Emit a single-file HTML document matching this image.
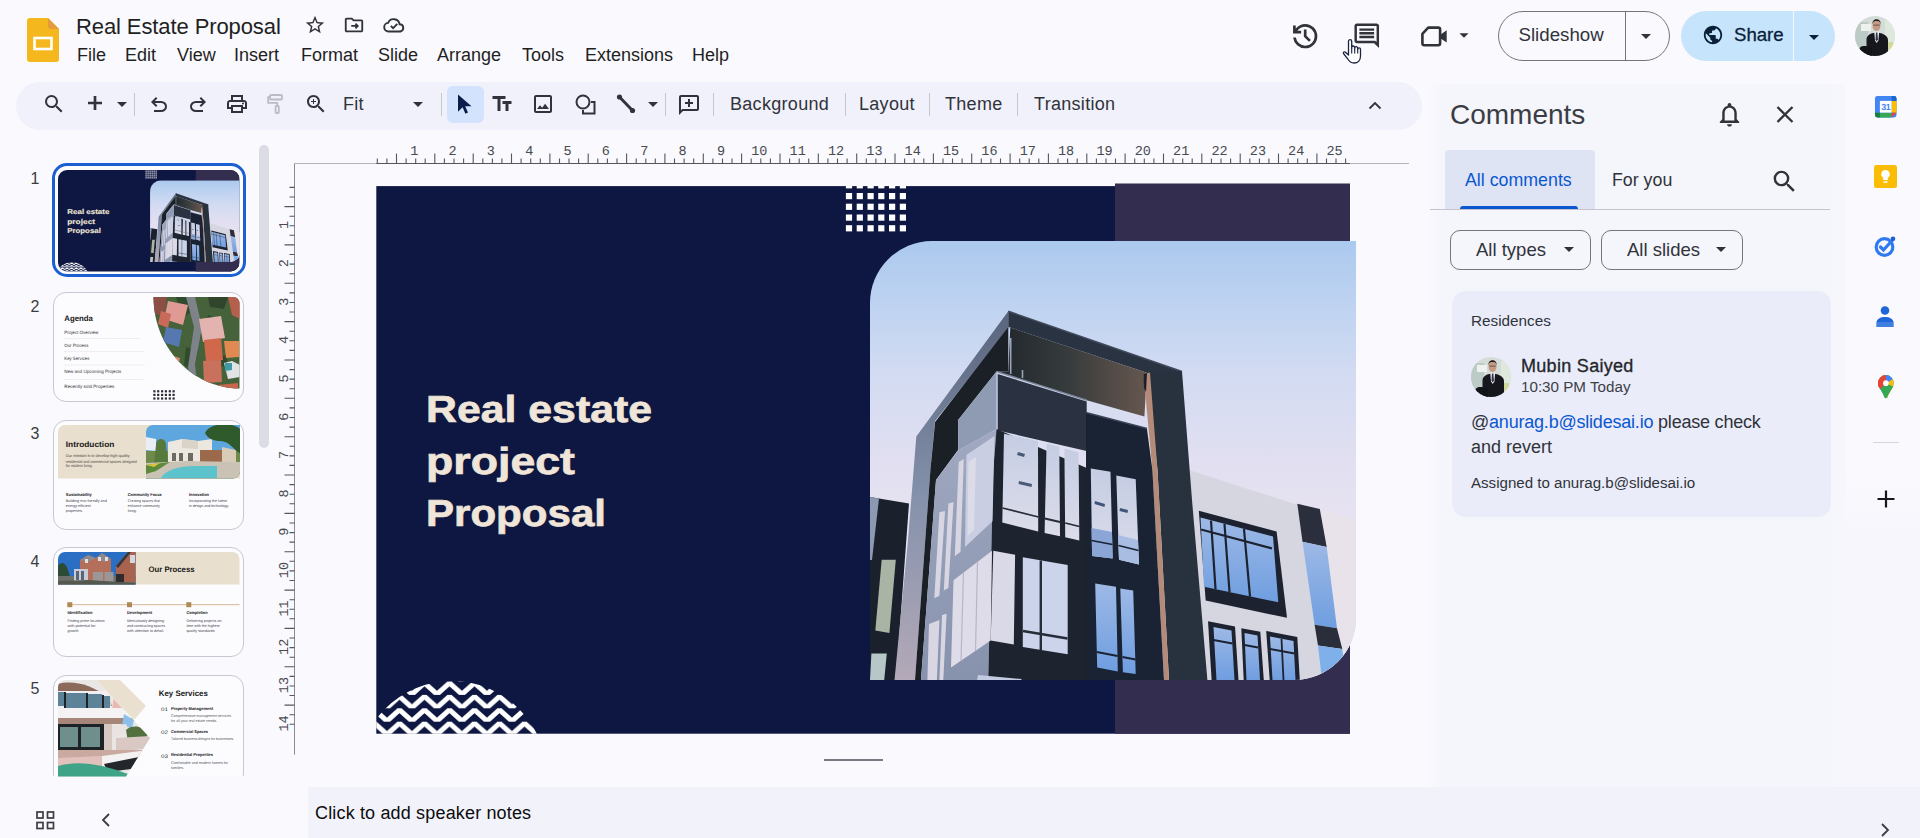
<!DOCTYPE html>
<html lang="en">
<head>
<meta charset="utf-8">
<title>Real Estate Proposal - Google Slides</title>
<style>
*{box-sizing:border-box;margin:0;padding:0}
html,body{width:1920px;height:838px;overflow:hidden}
body{background:#faf9fe;font-family:"Liberation Sans",Arial,sans-serif;color:#1f1f1f;position:relative}
.a{position:absolute}
.t{position:absolute;white-space:nowrap;line-height:1}
svg{position:absolute;overflow:visible}
svg text{text-rendering:geometricPrecision}
.menu{font-size:18px;top:46px;color:#1f1f1f}
.tb{font-size:18px;top:95px;color:#30333a;letter-spacing:.3px}
.sep{position:absolute;top:93px;width:1px;height:23px;background:#c7c7c7}
.num{font-size:16px;color:#3c3c3c;left:28px;width:14px;text-align:center}
.thumb{position:absolute;left:54px;width:190px;height:110px;border-radius:12px;border:1px solid #c9cad3;overflow:hidden;background:#fff}
</style>
</head>
<body>
<!-- background tint layers -->
<div class="a" style="left:1426px;top:84px;width:420px;height:754px;background:linear-gradient(90deg,rgba(245,245,252,0),#f5f5fc 18px,#f5f5fc 400px,rgba(245,245,252,.6))"></div>
<div class="a" style="left:1846px;top:470px;width:74px;height:368px;background:linear-gradient(180deg,rgba(246,246,252,0),#f6f6fc 70px)"></div>
<div class="a" style="left:308px;top:787px;width:1612px;height:51px;background:#f2f2fb"></div>
<!-- ===== HEADER ===== -->
<div id="header">
<svg style="left:27px;top:18px" width="32" height="44" viewBox="0 0 32 44"><path d="M3 0h18l11 11v30a3 3 0 0 1-3 3H3a3 3 0 0 1-3-3V3a3 3 0 0 1 3-3z" fill="#f4b71e"/><path d="M21 0l11 11H24a3 3 0 0 1-3-3z" fill="#e59a3b"/><rect x="7.5" y="20" width="17" height="11" fill="none" stroke="#fff" stroke-width="2.6"/></svg>
<div class="t" style="left:76px;top:16px;font-size:22px;letter-spacing:-.1px;color:#1f1f1f">Real Estate Proposal</div>
<div class="t menu" style="left:77px">File</div>
<div class="t menu" style="left:125px">Edit</div>
<div class="t menu" style="left:177px">View</div>
<div class="t menu" style="left:234px">Insert</div>
<div class="t menu" style="left:301px">Format</div>
<div class="t menu" style="left:378px">Slide</div>
<div class="t menu" style="left:437px">Arrange</div>
<div class="t menu" style="left:522px">Tools</div>
<div class="t menu" style="left:585px">Extensions</div>
<div class="t menu" style="left:692px">Help</div>
<!-- star / move / cloud -->
<svg style="left:304px;top:14px" width="22" height="22" viewBox="0 0 24 24"><path fill="#30333a" d="M22 9.240l-7.190-.62L12 2 9.190 8.630 2 9.240l5.460 4.730L5.820 21 12 17.270 18.180 21l-1.630-7.030L22 9.240zM12 15.400l-3.760 2.270 1-4.280-3.320-2.880 4.380-.38L12 6.100l1.710 4.040 4.380.38-3.320 2.880 1 4.280L12 15.400z"/></svg>
<svg style="left:343px;top:14px" width="22" height="22" viewBox="0 0 24 24"><path fill="#30333a" d="M20 6h-8l-2-2H4c-1.100 0-2 .9-2 2v12c0 1.100.9 2 2 2h16c1.100 0 2-.9 2-2V8c0-1.100-.9-2-2-2zm0 12H4V6h5.170l2 2H20v10zm-7.160-3.170l1.410 1.410L17.490 13l-3.240-3.240-1.410 1.410.83.830H9v2h4.670l-.83.830z"/></svg>
<svg style="left:382px;top:14px" width="24" height="22" viewBox="0 0 24 22"><path fill="none" stroke="#30333a" stroke-width="1.900" d="M6.500 17.500a4.300 4.300 0 0 1-.4-8.580 6 6 0 0 1 11.500 1.300A3.700 3.700 0 0 1 18.500 17.500z"/><path fill="none" stroke="#30333a" stroke-width="1.900" d="M8.800 11.800l2.300 2.300 4.200-4.200"/></svg>
<!-- history -->
<svg style="left:1288.800px;top:19.500px" width="32.400" height="32.400" viewBox="0 0 24 24"><path fill="#30333a" d="M12 21q-3.450 0-6.012-2.287T3.050 13H5.100q.35 2.600 2.313 4.300T12 19q2.925 0 4.963-2.037T19 12t-2.037-4.963T12 5q-1.725 0-3.225.8T6.250 8H9v2H3V4h2v2.350q1.275-1.600 3.113-2.475T12 3q1.875 0 3.513.713t2.850 1.924 1.925 2.850T21 12t-.712 3.513-1.925 2.850-2.850 1.925T12 21m2.800-4.800L11 12.400V7h2v4.600l3.200 3.200z"/></svg>
<!-- comments icon -->
<svg style="left:1351.500px;top:20.800px" width="29.500" height="29.500" viewBox="0 0 24 24"><path fill="#30333a" d="M21.990 4c0-1.100-.89-2-1.990-2H4c-1.100 0-2 .9-2 2v12c0 1.100.9 2 2 2h14l4 4-.01-18zM20 4v13.170L18.830 16H4V4h16zM6 12h12v2H6zm0-3h12v2H6zm0-3h12v2H6z"/></svg>
<!-- hand cursor -->
<svg style="left:1342px;top:38px" width="20" height="26" viewBox="0 0 20 26"><path fill="#fff" stroke="#1b2340" stroke-width="1.300" stroke-linejoin="round" d="M6.500 14V3.300a1.600 1.600 0 0 1 3.200 0V10.500v-1a1.500 1.500 0 0 1 3 0v1.300-.6a1.500 1.500 0 0 1 3 0v1.300-.3a1.400 1.400 0 0 1 2.800 0V18c0 4-2.300 7-6.500 7-3.300 0-4.800-1.600-6.300-4.200L1.500 15.500c-.6-1.100.9-2.300 2-1.300L6.500 17z"/><path fill="none" stroke="#1b2340" stroke-width="1.100" d="M9.700 10.500v5M12.700 11v4.500M15.700 11.500v4"/></svg>
<!-- camera -->
<svg style="left:1420px;top:25.200px" width="28" height="23" viewBox="0 0 28 23"><path fill="none" stroke="#30333a" stroke-width="2.600" stroke-linejoin="round" d="M2.400 8.800L8.200 2.600h9.900a2 2 0 0 1 2 2v13.700a2 2 0 0 1-2 2H4.400a2 2 0 0 1-2-2z"/><path fill="#30333a" d="M19.500 10.200L26.700 5.200v12.400L19.500 12.800z"/></svg>
<svg style="left:1452.700px;top:23.700px" width="22" height="22" viewBox="0 0 24 24"><path fill="#30333a" d="M7 10l5 5 5-5z"/></svg>
<!-- slideshow -->
<div class="a" style="left:1498px;top:11px;width:172px;height:50px;border-radius:25px;border:1px solid #747775"></div>
<div class="a" style="left:1625px;top:11px;width:1px;height:50px;background:#747775"></div>
<div class="t" style="left:1518.500px;top:26px;font-size:18.700px;color:#30333a">Slideshow</div>
<svg style="left:1634px;top:24px" width="24" height="24" viewBox="0 0 24 24"><path fill="#30333a" d="M7 10l5 5 5-5z"/></svg>
<!-- share -->
<div class="a" style="left:1681px;top:11px;width:154px;height:50px;border-radius:25px;background:#c6e5fc"></div>
<div class="a" style="left:1793px;top:11px;width:1px;height:50px;background:#f3f8fd"></div>
<svg style="left:1702px;top:24px" width="22" height="22" viewBox="0 0 24 24"><path fill="#0a2138" d="M12 2C6.480 2 2 6.480 2 12s4.480 10 10 10 10-4.480 10-10S17.520 2 12 2zm-1 17.930c-3.950-.49-7-3.850-7-7.930 0-.62.080-1.210.21-1.790L9 15v1c0 1.100.9 2 2 2v1.930zm6.900-2.540c-.26-.81-1-1.390-1.900-1.390h-1v-3c0-.55-.45-1-1-1H8v-2h2c.55 0 1-.45 1-1V7h2c1.100 0 2-.9 2-2v-.41c2.930 1.190 5 4.060 5 7.410 0 2.080-.8 3.970-2.100 5.390z"/></svg>
<div class="t" style="left:1734px;top:25.500px;font-size:18.600px;color:#0a2138;-webkit-text-stroke:.3px #0a2138">Share</div>
<svg style="left:1802px;top:25px" width="24" height="24" viewBox="0 0 24 24"><path fill="#0a2138" d="M7 10l5 5 5-5z"/></svg>
<!-- avatar -->
<svg style="left:1855px;top:16px" width="40" height="40" viewBox="0 0 40 40"><defs><clipPath id="av1"><circle cx="20" cy="20" r="20"/></clipPath></defs><g clip-path="url(#av1)"><rect width="40" height="40" fill="#d3dcd6"/><rect x="0" y="6" width="13" height="34" fill="#bccbc6"/><rect x="6" y="8" width="10" height="7" fill="#eef1ee"/><rect x="30" y="4" width="10" height="30" fill="#dfe8dc"/><rect x="33" y="26" width="5" height="8" fill="#c9cf6a" opacity=".6"/><path d="M11.500 40V24c0-4 3-6.500 7-7l3-1 3 1c4 .5 8.500 3 8.500 7v16z" fill="#16171d"/><path d="M4 34c0-3 3-4.500 7-4l6 2v8H4z" fill="#121318"/><path d="M19.200 15.500h5l-.8 9-1.700 2.500-1.700-2.500z" fill="#e9e9ee"/><path d="M21 16.500h1.400l.5 7-1.200 2-1.200-2z" fill="#30334a"/><ellipse cx="21.500" cy="9.500" rx="4" ry="5.600" fill="#c49a86"/><path d="M17.300 8.500c-.5-7 9-7 8.400 0-.6-3-1.500-3.600-4.200-3.600s-3.600.6-4.200 3.600z" fill="#231c1a"/><rect x="18.300" y="8.600" width="6.400" height="1" fill="#4a3a34" opacity=".7"/></g></svg>
</div>
<!-- ===== TOOLBAR ===== -->
<div id="toolbar">
<div class="a" style="left:16px;top:82px;width:1406px;height:48px;border-radius:24px;background:#f0f1fb"></div>
<!-- search -->
<svg style="left:42px;top:92px" width="24" height="24" viewBox="0 0 24 24"><path fill="#30333a" d="M15.5 14h-.79l-.28-.27A6.471 6.471 0 0 0 16 9.500 6.500 6.500 0 1 0 9.500 16c1.610 0 3.090-.59 4.230-1.570l.27.28v.79l5 4.990L20.490 19l-4.990-5zm-6 0C7.010 14 5 11.990 5 9.500S7.010 5 9.500 5 14 7.010 14 9.500 11.990 14 9.500 14z"/></svg>
<!-- plus -->
<svg style="left:83px;top:91px" width="24" height="24" viewBox="0 0 24 24"><path fill="none" stroke="#30333a" stroke-width="2.700" d="M5 12h14M12 5v14"/></svg>
<svg style="left:110px;top:92px" width="24" height="24" viewBox="0 0 24 24"><path fill="#30333a" d="M7 10l5 5 5-5z"/></svg>
<div class="sep" style="left:134px"></div>
<!-- undo -->
<svg style="left:147px;top:93px" width="24" height="24" viewBox="0 0 24 24"><path fill="#30333a" d="M7 19v-2h7.100q1.575 0 2.738-1T18 13.500 16.838 11 14.100 10H7.800l2.600 2.600L9 14 4 9l5-5 1.400 1.400L7.800 8h6.300q2.425 0 4.163 1.575T20 13.500t-1.737 3.925T14.100 19z"/></svg>
<!-- redo -->
<svg style="left:186px;top:93px" width="24" height="24" viewBox="0 0 24 24"><g transform="translate(24,0) scale(-1,1)"><path fill="#30333a" d="M7 19v-2h7.100q1.575 0 2.738-1T18 13.500 16.838 11 14.100 10H7.800l2.600 2.600L9 14 4 9l5-5 1.400 1.400L7.800 8h6.300q2.425 0 4.163 1.575T20 13.500t-1.737 3.925T14.100 19z"/></g></svg>
<!-- print -->
<svg style="left:225px;top:92px" width="24" height="24" viewBox="0 0 24 24"><path fill="#30333a" fill-rule="evenodd" d="M19 8h-1V3H6v5H5c-1.660 0-3 1.340-3 3v6h4v4h12v-4h4v-6c0-1.660-1.340-3-3-3zM8 5h8v3H8V5zm8 14H8v-4h8v4zm2-4v-2H6v2H4v-4c0-.55.45-1 1-1h14c.55 0 1 .45 1 1v4h-2z"/><circle cx="18" cy="11.500" r="1" fill="#30333a"/></svg>
<!-- paint format (disabled) -->
<svg style="left:265px;top:92px" width="24" height="24" viewBox="0 0 24 24"><g fill="none" stroke="#b9bcc6" stroke-width="1.800"><rect x="5" y="3" width="12" height="4.500" rx="1"/><path d="M5 5.200H3.200v5.600h9V14"/><rect x="10.600" y="14" width="3.200" height="7" rx=".8"/></g></svg>
<!-- zoom -->
<svg style="left:304px;top:92px" width="24" height="24" viewBox="0 0 24 24"><path fill="#30333a" d="M15.500 14h-.79l-.28-.27C15.410 12.590 16 11.110 16 9.500 16 5.910 13.090 3 9.500 3S3 5.910 3 9.500 5.910 16 9.500 16c1.610 0 3.090-.59 4.230-1.570l.27.28v.79l5 4.990L20.490 19l-4.990-5zm-6 0C7.010 14 5 11.990 5 9.500S7.010 5 9.500 5 14 7.010 14 9.500 11.990 14 9.500 14zm.5-7H9v2H7v1h2v2h1v-2h2V9h-2z"/></svg>
<div class="t tb" style="left:343px">Fit</div>
<svg style="left:406px;top:92px" width="24" height="24" viewBox="0 0 24 24"><path fill="#30333a" d="M7 10l5 5 5-5z"/></svg>
<div class="sep" style="left:441px"></div>
<!-- cursor -->
<div class="a" style="left:447px;top:86px;width:37px;height:37px;border-radius:6px;background:#d3e3fd"></div>
<svg style="left:453px;top:92px" width="24" height="24" viewBox="0 0 24 24"><path fill="#0b1d4a" d="M5 2.500v17.200l4.600-4.500 2.800 6.500 2.600-1.100-2.800-6.400H18.500z"/></svg>
<!-- Tt -->
<svg style="left:490px;top:92px" width="24" height="24" viewBox="0 0 24 24"><path fill="#30333a" d="M2.500 4v3h5v12h3V7h5V4h-13zm19 5h-9v3h3v7h3v-7h3V9z"/></svg>
<!-- image -->
<svg style="left:531px;top:92px" width="24" height="24" viewBox="0 0 24 24"><path fill="#30333a" d="M19 5v14H5V5h14m0-2H5c-1.100 0-2 .9-2 2v14c0 1.100.9 2 2 2h14c1.100 0 2-.9 2-2V5c0-1.100-.9-2-2-2zm-4.860 8.860l-3 3.870L9 13.140 6 17h12l-3.860-5.140z"/></svg>
<!-- shape -->
<svg style="left:573px;top:92px" width="24" height="24" viewBox="0 0 24 24"><g fill="none" stroke="#30333a" stroke-width="2"><circle cx="10" cy="10" r="6.500"/><path d="M18 10h3.500v11.500H10V18"/></g></svg>
<!-- line -->
<svg style="left:614px;top:92px" width="24" height="24" viewBox="0 0 24 24"><path d="M5.500 5L18.500 18.500" stroke="#30333a" stroke-width="2.900" fill="none"/><circle cx="5.500" cy="5" r="2.600" fill="#30333a"/><circle cx="18.500" cy="18.500" r="2.600" fill="#30333a"/></svg>
<svg style="left:641px;top:92px" width="24" height="24" viewBox="0 0 24 24"><path fill="#30333a" d="M7 10l5 5 5-5z"/></svg>
<div class="sep" style="left:665px"></div>
<!-- add comment -->
<svg style="left:677px;top:93px" width="24" height="24" viewBox="0 0 24 24"><path fill="#30333a" d="M20 2H4c-1.100 0-2 .9-2 2v18l4-4h14c1.100 0 2-.9 2-2V4c0-1.100-.9-2-2-2zm0 14H5.170L4 17.170V4h16v12zM11 14h2v-3h3V9h-3V6h-2v3H8v2h3z"/></svg>
<div class="sep" style="left:713px"></div>
<div class="t tb" style="left:730px">Background</div>
<div class="sep" style="left:845px"></div>
<div class="t tb" style="left:859px">Layout</div>
<div class="sep" style="left:929px"></div>
<div class="t tb" style="left:945px">Theme</div>
<div class="sep" style="left:1017px"></div>
<div class="t tb" style="left:1034px">Transition</div>
<svg style="left:1363px;top:94px" width="24" height="24" viewBox="0 0 24 24"><path fill="none" stroke="#30333a" stroke-width="1.800" d="M6.500 14.500L12 9l5.500 5.500"/></svg>
</div>
<!-- ===== FILMSTRIP ===== -->
<div id="film">
<div class="t num" style="top:171px">1</div>
<div class="t num" style="top:299px">2</div>
<div class="t num" style="top:426px">3</div>
<div class="t num" style="top:554px">4</div>
<div class="t num" style="top:681px">5</div>
<div class="a" style="left:259px;top:145px;width:10px;height:303px;border-radius:5px;background:#dcdce5"></div>
<div class="a" style="left:52px;top:163px;width:194px;height:114px;border-radius:15px;border:3px solid #1b5fd1;background:#fdfdff"></div>
<svg style="left:58px;top:169.700px" width="181.500" height="101.500" viewBox="0 0 181.500 101.500"><defs><clipPath id="t1c"><rect width="181.500" height="101.500" rx="9"/></clipPath></defs><g clip-path="url(#t1c)"><use href="#slideG" transform="scale(.18640) translate(-376.300 -186.100)"/></g></svg>
<div class="a" style="left:53px;top:292px;width:191px;height:110px;border-radius:13px;border:1px solid #c6c8d3;background:#fcfcff"></div>
<div class="a" style="left:53px;top:420px;width:191px;height:110px;border-radius:13px;border:1px solid #c6c8d3;background:#fcfcff"></div>
<div class="a" style="left:53px;top:547px;width:191px;height:110px;border-radius:13px;border:1px solid #c6c8d3;background:#fcfcff"></div>
<div class="a" style="left:53px;top:675px;width:191px;height:112px;border-radius:13px;border:1px solid #c6c8d3;background:#fcfcff"></div>
<div class="a" style="left:40px;top:776px;width:220px;height:14px;background:#faf9fe"></div>
<svg style="left:58px;top:297px" width="182" height="102" viewBox="0 0 182 102">
<defs><clipPath id="t2c"><path d="M95.500 0H175.500a6 6 0 0 1 6 6V91.500C134 91.500 95.500 50 95.500 0z"/></clipPath></defs>
<g clip-path="url(#t2c)"><rect x="95" y="0" width="87" height="92" fill="#46623a"/><path d="M118 0h12l4 14-10 8zM150 18l10 4-4 14-10-6zM128 50l12 4-4 20-10-6zM160 60l8-2 2 10-8 2z" fill="#2f4a2c"/><path d="M128 0l8 30-6 40 4 22h6l-3-24 7-38-7-30z" fill="#7d8388"/><path d="M95 0h14l-3 20-10-4z" fill="#8c4f43"/><path d="M110 4l20 4-5 20-19-6z" fill="#e09a94"/><path d="M103 14l10 3-3 14-10-4z" fill="#c8695a"/><path d="M141 22l22-3 4 22-22 4z" fill="#e3b3b0"/><path d="M108 30l16 3-3 17-16-5z" fill="#5578b1"/><path d="M146 43l17-2 2 22-17 2z" fill="#d0694b"/><path d="M166 44l15 0v16l-13 1z" fill="#e08a52"/><path d="M112 58l10 3-2 10-10-5z" fill="#d98a6e"/><path d="M145 64l18-1 1 22-18 1z" fill="#c9715c"/><path d="M166 66l8-2 8 4v12l-12 2z" fill="#dfe3e6"/><path d="M167 66l7 0v7l-7 1z" fill="#3d9aa6"/><path d="M150 0h20l-4 12-14-2z" fill="#31452c"/><path d="M170 0h12v22l-8-4z" fill="#b65f4c"/><path d="M160 88l20-2v6h-20z" fill="#c7654e"/></g>
<g font-family="Liberation Sans, Arial, sans-serif" fill="#161616"><text x="6.300" y="23.600" font-size="8" font-weight="bold" textLength="28.500" lengthAdjust="spacingAndGlyphs">Agenda</text>
<text x="6.300" y="37.0" font-size="4.600" fill="#333" textLength="34" lengthAdjust="spacingAndGlyphs">Project Overview</text>
<text x="6.300" y="50.0" font-size="4.600" fill="#333" textLength="24" lengthAdjust="spacingAndGlyphs">Our Process</text>
<text x="6.300" y="63.0" font-size="4.600" fill="#333" textLength="25" lengthAdjust="spacingAndGlyphs">Key Services</text>
<text x="6.300" y="76.0" font-size="4.600" fill="#333" textLength="57" lengthAdjust="spacingAndGlyphs">New and Upcoming Projects</text>
<text x="6.300" y="91.0" font-size="4.600" fill="#333" textLength="50" lengthAdjust="spacingAndGlyphs">Recently sold Properties</text>
</g>
<path d="M6.500 41.500H82M6.500 54.500H87M6.500 68H87M6.500 82.500H85" stroke="#d5d5de" stroke-width=".6" stroke-dasharray="2 1.200" fill="none"/>
<g fill="#2a2a3a"><rect x="95.3" y="93.2" width="2.200" height="2.200"/><rect x="99.1" y="93.2" width="2.200" height="2.200"/><rect x="103.0" y="93.2" width="2.200" height="2.200"/><rect x="106.8" y="93.2" width="2.200" height="2.200"/><rect x="110.7" y="93.2" width="2.200" height="2.200"/><rect x="114.5" y="93.2" width="2.200" height="2.200"/><rect x="95.3" y="96.8" width="2.200" height="2.200"/><rect x="99.1" y="96.8" width="2.200" height="2.200"/><rect x="103.0" y="96.8" width="2.200" height="2.200"/><rect x="106.8" y="96.8" width="2.200" height="2.200"/><rect x="110.7" y="96.8" width="2.200" height="2.200"/><rect x="114.5" y="96.8" width="2.200" height="2.200"/><rect x="95.3" y="100.4" width="2.200" height="2.200"/><rect x="99.1" y="100.4" width="2.200" height="2.200"/><rect x="103.0" y="100.4" width="2.200" height="2.200"/><rect x="106.8" y="100.4" width="2.200" height="2.200"/><rect x="110.7" y="100.4" width="2.200" height="2.200"/><rect x="114.5" y="100.4" width="2.200" height="2.200"/></g>
</svg>
<svg style="left:58px;top:424.700px" width="182" height="102" viewBox="0 0 182 102">
<defs><clipPath id="t3c"><path d="M95 0H182V46a7.500 7.500 0 0 1-7.500 7.500H88V7a7 7 0 0 1 7-7z"/></clipPath></defs>
<path d="M7 0H182V53.500H0V7a7 7 0 0 1 7-7z" fill="#e8dfce"/>
<g clip-path="url(#t3c)"><rect x="88" y="0" width="94" height="54" fill="#5da6de"/><path d="M88 12l10 2v12l-10-1z" fill="#e9eef5"/><path d="M88 26h94v28h-94z" fill="#6d8a4a"/><path d="M98 20c0-8 10-8 10 0l2 18h-14z" fill="#56793d"/><path d="M110 17l14-3 16 2 14-2v24h-44z" fill="#ece8e0"/><path d="M124 14l16 2v8l-16-1z" fill="#d9d3c8"/><path d="M142 25h22v13h-22z" fill="#9a6a4a"/><path d="M164 22l14 3v14h-14z" fill="#d8cbb8"/><path d="M114 28h4v8h-4zM121 28h4v8h-4zM130 28h5v8h-5z" fill="#6c6a63"/><path d="M147 8c6-12 30-10 35-4v24c-6-2-10-12-20-12-6 0-12-2-15-8z" fill="#2f5a2c"/><path d="M88 38l40-2 54 1v17h-94z" fill="#c9c2b5"/><path d="M103 53c4-8 18-12 34-12h22v12z" fill="#5cc3cd"/><path d="M88 40l24-3-14 9-10 3z" fill="#5a8a3a"/><path d="M88 40l14-2-6 4z" fill="#d9c23a"/></g>
<g font-family="Liberation Sans, Arial, sans-serif" fill="#161616"><text x="7.800" y="21.600" font-size="8" font-weight="bold" textLength="48.500" lengthAdjust="spacingAndGlyphs">Introduction</text>
<text x="7.800" y="32.4" font-size="4" fill="#4a4640" textLength="64" lengthAdjust="spacingAndGlyphs">Our mission is to develop high-quality</text>
<text x="7.800" y="37.5" font-size="4" fill="#4a4640" textLength="71" lengthAdjust="spacingAndGlyphs">residential and commercial spaces designed</text>
<text x="7.800" y="42.4" font-size="4" fill="#4a4640" textLength="27" lengthAdjust="spacingAndGlyphs">for modern living.</text>
<text x="7.8" y="71.400" font-size="4.200" font-weight="bold" textLength="26" lengthAdjust="spacingAndGlyphs">Sustainability</text>
<text x="7.8" y="77.2" font-size="3.800" fill="#44444c" textLength="41" lengthAdjust="spacingAndGlyphs">Building eco-friendly and</text>
<text x="7.8" y="82.3" font-size="3.800" fill="#44444c" textLength="25" lengthAdjust="spacingAndGlyphs">energy-efficient</text>
<text x="7.8" y="87.4" font-size="3.800" fill="#44444c" textLength="17" lengthAdjust="spacingAndGlyphs">properties.</text>
<text x="69.8" y="71.400" font-size="4.200" font-weight="bold" textLength="34" lengthAdjust="spacingAndGlyphs">Community Focus</text>
<text x="69.8" y="77.2" font-size="3.800" fill="#44444c" textLength="32" lengthAdjust="spacingAndGlyphs">Creating spaces that</text>
<text x="69.8" y="82.3" font-size="3.800" fill="#44444c" textLength="32" lengthAdjust="spacingAndGlyphs">enhance community</text>
<text x="69.8" y="87.4" font-size="3.800" fill="#44444c" textLength="9" lengthAdjust="spacingAndGlyphs">living.</text>
<text x="131.0" y="71.400" font-size="4.200" font-weight="bold" textLength="20" lengthAdjust="spacingAndGlyphs">Innovation</text>
<text x="131.0" y="77.2" font-size="3.800" fill="#44444c" textLength="38" lengthAdjust="spacingAndGlyphs">Incorporating the latest</text>
<text x="131.0" y="82.3" font-size="3.800" fill="#44444c" textLength="40" lengthAdjust="spacingAndGlyphs">in design and technology.</text>
</g></svg>
<svg style="left:58px;top:552px" width="182" height="102" viewBox="0 0 182 102">
<defs><clipPath id="t4c"><path d="M7 0H77.600V32.500H0V7a7 7 0 0 1 7-7z"/></clipPath></defs>
<path d="M77.600 0H174.500a7 7 0 0 1 7 7V32.500H77.600z" fill="#e8dfce"/>
<g clip-path="url(#t4c)"><rect width="78" height="33" fill="#2a6fc4"/><path d="M0 14c4-6 8-2 10 4l4 14H0z" fill="#2d4a33"/><path d="M0 24h78v9H0z" fill="#6c6f6a"/><path d="M22 8l8-5 8 3 6-5 9 6v22H22z" fill="#b36f5a"/><path d="M22 8l8-5 8 3-8 4zM38 6l6-5 9 6-7 3z" fill="#8c8a8e"/><path d="M58 14l12-14h8v30H58z" fill="#a8634f"/><path d="M58 14l12-14h3L60 16z" fill="#3a3436"/><path d="M16 17h14v12H16z" fill="#c9ccd6"/><path d="M18 19h3v9h-3zM23 19h3v9h-3z" fill="#5a6578"/><path d="M35 20h10v10H35zM46.500 20h9v10h-9z" fill="#9a9796"/><path d="M27 7h3v4h-3zM40 5h3v4h-3zM47 5h3v4h-3z" fill="#e3e0dc"/><path d="M72 3h5v8h-5z" fill="#d5d7de"/><path d="M58 22h8v8h-8z" fill="#2f2a2c"/><path d="M0 29l30-1 48 3v2H0z" fill="#55584f"/></g>
<g font-family="Liberation Sans, Arial, sans-serif" fill="#161616"><text x="90.500" y="19.600" font-size="8" font-weight="bold" textLength="46" lengthAdjust="spacingAndGlyphs">Our Process</text>
<path d="M9.300 52.700H181.500" stroke="#cfb088" stroke-width=".9" fill="none"/>
<rect x="9.3" y="50.200" width="5" height="5" fill="#b08a55"/>
<rect x="69.0" y="50.200" width="5" height="5" fill="#b08a55"/>
<rect x="128.3" y="50.200" width="5" height="5" fill="#b08a55"/>
<text x="9.5" y="62.300" font-size="4.200" font-weight="bold" textLength="25" lengthAdjust="spacingAndGlyphs">Identification</text>
<text x="9.5" y="70.0" font-size="3.800" fill="#44444c" textLength="37" lengthAdjust="spacingAndGlyphs">Finding prime locations</text>
<text x="9.5" y="75.0" font-size="3.800" fill="#44444c" textLength="28" lengthAdjust="spacingAndGlyphs">with potential for</text>
<text x="9.5" y="80.1" font-size="3.800" fill="#44444c" textLength="11" lengthAdjust="spacingAndGlyphs">growth</text>
<text x="69.0" y="62.300" font-size="4.200" font-weight="bold" textLength="25" lengthAdjust="spacingAndGlyphs">Development</text>
<text x="69.0" y="70.0" font-size="3.800" fill="#44444c" textLength="37" lengthAdjust="spacingAndGlyphs">Meticulously designing</text>
<text x="69.0" y="75.0" font-size="3.800" fill="#44444c" textLength="38" lengthAdjust="spacingAndGlyphs">and constructing spaces</text>
<text x="69.0" y="80.1" font-size="3.800" fill="#44444c" textLength="37" lengthAdjust="spacingAndGlyphs">with attention to detail.</text>
<text x="128.5" y="62.300" font-size="4.200" font-weight="bold" textLength="21" lengthAdjust="spacingAndGlyphs">Completion</text>
<text x="128.5" y="70.0" font-size="3.800" fill="#44444c" textLength="35" lengthAdjust="spacingAndGlyphs">Delivering projects on</text>
<text x="128.5" y="75.0" font-size="3.800" fill="#44444c" textLength="33" lengthAdjust="spacingAndGlyphs">time with the highest</text>
<text x="128.5" y="80.1" font-size="3.800" fill="#44444c" textLength="28" lengthAdjust="spacingAndGlyphs">quality standards</text>
</g></svg>
<svg style="left:58px;top:679.500px" width="182" height="96.500" viewBox="0 0 182 96.500">
<defs><clipPath id="t5c"><path d="M7 0H38L92 58 68 96.500H0V7a7 7 0 0 1 7-7z"/></clipPath></defs>
<path d="M38 0h24l26 26-12 14z" fill="#e9e0d0"/>
<g clip-path="url(#t5c)"><rect width="95" height="97" fill="#e9e6e6"/><path d="M0 4c14-4 34 0 50 14l4 8H0z" fill="#8b6a5c"/><path d="M0 11h50l4 20H0z" fill="#f1efef"/><path d="M0 12h6v14H0zM8 13h20v15H8zM30 14h14v15H30zM46 16h6v14h-6z" fill="#5d8398"/><path d="M6 12h2v16H6zM28 13h2v16h-2zM44 15h2v15h-2z" fill="#1e2226"/><path d="M56 14l12 14-6 10-8-6z" fill="#e7b9b0"/><path d="M0 28h68l10 10H0z" fill="#f4f2f3"/><path d="M0 38h78l-6 6H0z" fill="#a58678"/><path d="M0 44h46v26H0z" fill="#1d2226"/><path d="M2 47h18v20H2zM23 47h19v20H23z" fill="#6f8f8c"/><path d="M46 44h8v26h-8z" fill="#d6c9c2"/><path d="M66 34l10 6-2 8-10-2z" fill="#8cc0ea"/><path d="M54 46l14-2 4 8-18 6z" fill="#e9e4e2"/><path d="M68 50c6-6 18-4 22 4l-4 8H70z" fill="#55703f"/><path d="M58 58l34-2v12l-34 4z" fill="#d9c8c4"/><path d="M0 70h92l-4 8H0z" fill="#c9a9a0"/><path d="M0 78l44-2 0 10-44 4z" fill="#e2c1bd"/><path d="M44 76l46-6-8 12-38 6z" fill="#f3f1f2"/><path d="M46 84l40-8-6 12-30 4z" fill="#23262a"/><path d="M0 86c20-6 44-2 70 8v3H0z" fill="#3fa487"/></g>
<g font-family="Liberation Sans, Arial, sans-serif" fill="#161616"><text x="100.800" y="16" font-size="8" font-weight="bold" textLength="49" lengthAdjust="spacingAndGlyphs">Key Services</text>
<text x="103" y="30.9" font-size="5" fill="#333" textLength="7" lengthAdjust="spacingAndGlyphs">01</text>
<text x="113" y="29.6" font-size="4.200" font-weight="bold" textLength="42" lengthAdjust="spacingAndGlyphs">Property Management</text>
<text x="113" y="37.4" font-size="3.800" fill="#55555c" textLength="60" lengthAdjust="spacingAndGlyphs">Comprehensive management services</text>
<text x="113" y="42.4" font-size="3.800" fill="#55555c" textLength="46" lengthAdjust="spacingAndGlyphs">for all your real estate needs.</text>
<text x="103" y="53.9" font-size="5" fill="#333" textLength="7" lengthAdjust="spacingAndGlyphs">02</text>
<text x="113" y="52.6" font-size="4.200" font-weight="bold" textLength="37" lengthAdjust="spacingAndGlyphs">Commercial Spaces</text>
<text x="113" y="60.4" font-size="3.800" fill="#55555c" textLength="63" lengthAdjust="spacingAndGlyphs">Tailored business designs for businesses.</text>
<text x="103" y="77.7" font-size="5" fill="#333" textLength="7" lengthAdjust="spacingAndGlyphs">03</text>
<text x="113" y="76.4" font-size="4.200" font-weight="bold" textLength="42" lengthAdjust="spacingAndGlyphs">Residential Properties</text>
<text x="113" y="84.2" font-size="3.800" fill="#55555c" textLength="57" lengthAdjust="spacingAndGlyphs">Comfortable and modern homes for</text>
<text x="113" y="89.2" font-size="3.800" fill="#55555c" textLength="13" lengthAdjust="spacingAndGlyphs">families.</text>
</g></svg>
<svg style="left:36px;top:811px" width="19" height="19" viewBox="0 0 19 19"><g fill="none" stroke="#3a3d45" stroke-width="1.700"><rect x="1" y="1" width="6" height="6"/><rect x="11.500" y="1" width="6" height="6"/><rect x="1" y="11.500" width="6" height="6"/><rect x="11.500" y="11.500" width="6" height="6"/></g></svg>
<svg style="left:99px;top:812px" width="14" height="16" viewBox="0 0 14 16"><path d="M10 2L4 8l6 6" fill="none" stroke="#3a3d45" stroke-width="1.800"/></svg>
</div>
<!-- ===== CANVAS ===== -->
<div id="canvas">
<svg style="left:0;top:0" width="1430" height="790" viewBox="0 0 1430 790">
<path d="M294.5 163.500H1409" stroke="#b4b4b8" stroke-width="1" fill="none"/>
<path d="M294.500 163.500V754.7" stroke="#8a8a90" stroke-width="1" fill="none"/>
<path d="M376.3 163.500H1350.0" stroke="#55575e" stroke-width="1.200" fill="none"/>
<path d="M377.3 163.5v-5M386.9 163.5v-5M396.5 163.5v-10M406.1 163.5v-5M415.7 163.5v-5M425.2 163.5v-5M434.8 163.5v-10M444.4 163.5v-5M454.0 163.5v-5M463.6 163.5v-5M473.2 163.5v-10M482.8 163.5v-5M492.4 163.5v-5M501.9 163.5v-5M511.5 163.5v-10M521.1 163.5v-5M530.7 163.5v-5M540.3 163.5v-5M549.9 163.5v-10M559.5 163.5v-5M569.0 163.5v-5M578.6 163.5v-5M588.2 163.5v-10M597.8 163.5v-5M607.4 163.5v-5M617.0 163.5v-5M626.6 163.5v-10M636.2 163.5v-5M645.8 163.5v-5M655.3 163.5v-5M664.9 163.5v-10M674.5 163.5v-5M684.1 163.5v-5M693.7 163.5v-5M703.3 163.5v-10M712.9 163.5v-5M722.5 163.5v-5M732.0 163.5v-5M741.6 163.5v-10M751.2 163.5v-5M760.8 163.5v-5M770.4 163.5v-5M780.0 163.5v-10M789.6 163.5v-5M799.2 163.5v-5M808.7 163.5v-5M818.3 163.5v-10M827.9 163.5v-5M837.5 163.5v-5M847.1 163.5v-5M856.7 163.5v-10M866.3 163.5v-5M875.9 163.5v-5M885.4 163.5v-5M895.0 163.5v-10M904.6 163.5v-5M914.2 163.5v-5M923.8 163.5v-5M933.4 163.5v-10M943.0 163.5v-5M952.5 163.5v-5M962.1 163.5v-5M971.7 163.5v-10M981.3 163.5v-5M990.9 163.5v-5M1000.5 163.5v-5M1010.1 163.5v-10M1019.7 163.5v-5M1029.2 163.5v-5M1038.8 163.5v-5M1048.4 163.5v-10M1058.0 163.5v-5M1067.6 163.5v-5M1077.2 163.5v-5M1086.8 163.5v-10M1096.4 163.5v-5M1106.0 163.5v-5M1115.5 163.5v-5M1125.1 163.5v-10M1134.7 163.5v-5M1144.3 163.5v-5M1153.9 163.5v-5M1163.5 163.5v-10M1173.1 163.5v-5M1182.7 163.5v-5M1192.2 163.5v-5M1201.8 163.5v-10M1211.4 163.5v-5M1221.0 163.5v-5M1230.6 163.5v-5M1240.2 163.5v-10M1249.8 163.5v-5M1259.4 163.5v-5M1268.9 163.5v-5M1278.5 163.5v-10M1288.1 163.5v-5M1297.7 163.5v-5M1307.3 163.5v-5M1316.9 163.5v-10M1326.5 163.5v-5M1336.0 163.5v-5M1345.6 163.5v-5" stroke="#55575e" stroke-width="1.100" fill="none"/>
<path d="M294.5 187.4h-5M294.5 197.0h-5M294.5 206.6h-10M294.5 216.2h-5M294.5 225.8h-5M294.5 235.3h-5M294.5 244.9h-10M294.5 254.5h-5M294.5 264.1h-5M294.5 273.7h-5M294.5 283.3h-10M294.5 292.9h-5M294.5 302.5h-5M294.5 312.0h-5M294.5 321.6h-10M294.5 331.2h-5M294.5 340.8h-5M294.5 350.4h-5M294.5 360.0h-10M294.5 369.6h-5M294.5 379.1h-5M294.5 388.7h-5M294.5 398.3h-10M294.5 407.9h-5M294.5 417.5h-5M294.5 427.1h-5M294.5 436.7h-10M294.5 446.3h-5M294.5 455.9h-5M294.5 465.4h-5M294.5 475.0h-10M294.5 484.6h-5M294.5 494.2h-5M294.5 503.8h-5M294.5 513.4h-10M294.5 523.0h-5M294.5 532.6h-5M294.5 542.1h-5M294.5 551.7h-10M294.5 561.3h-5M294.5 570.9h-5M294.5 580.5h-5M294.5 590.1h-10M294.5 599.7h-5M294.5 609.2h-5M294.5 618.8h-5M294.5 628.4h-10M294.5 638.0h-5M294.5 647.6h-5M294.5 657.2h-5M294.5 666.8h-10M294.5 676.4h-5M294.5 686.0h-5M294.5 695.5h-5M294.5 705.1h-10M294.5 714.7h-5M294.5 724.3h-5" stroke="#55575e" stroke-width="1.100" fill="none"/>
<g font-family="Liberation Mono, DejaVu Sans Mono, monospace" font-size="13.500" fill="#484a50" text-anchor="middle">
<text x="414.2" y="155.3">1</text>
<text x="452.5" y="155.3">2</text>
<text x="490.9" y="155.3">3</text>
<text x="529.2" y="155.3">4</text>
<text x="567.5" y="155.3">5</text>
<text x="605.9" y="155.3">6</text>
<text x="644.2" y="155.3">7</text>
<text x="682.6" y="155.3">8</text>
<text x="721.0" y="155.3">9</text>
<text x="759.3" y="155.3">10</text>
<text x="797.7" y="155.3">11</text>
<text x="836.0" y="155.3">12</text>
<text x="874.4" y="155.3">13</text>
<text x="912.7" y="155.3">14</text>
<text x="951.0" y="155.3">15</text>
<text x="989.4" y="155.3">16</text>
<text x="1027.8" y="155.3">17</text>
<text x="1066.1" y="155.3">18</text>
<text x="1104.5" y="155.3">19</text>
<text x="1142.8" y="155.3">20</text>
<text x="1181.2" y="155.3">21</text>
<text x="1219.5" y="155.3">22</text>
<text x="1257.9" y="155.3">23</text>
<text x="1296.2" y="155.3">24</text>
<text x="1334.5" y="155.3">25</text>
<text transform="translate(287.5 224.9) rotate(-90)">1</text>
<text transform="translate(287.5 263.3) rotate(-90)">2</text>
<text transform="translate(287.5 301.6) rotate(-90)">3</text>
<text transform="translate(287.5 340.0) rotate(-90)">4</text>
<text transform="translate(287.5 378.4) rotate(-90)">5</text>
<text transform="translate(287.5 416.7) rotate(-90)">6</text>
<text transform="translate(287.5 455.0) rotate(-90)">7</text>
<text transform="translate(287.5 493.4) rotate(-90)">8</text>
<text transform="translate(287.5 531.8) rotate(-90)">9</text>
<text transform="translate(287.5 570.1) rotate(-90)">10</text>
<text transform="translate(287.5 608.5) rotate(-90)">11</text>
<text transform="translate(287.5 646.8) rotate(-90)">12</text>
<text transform="translate(287.5 685.1) rotate(-90)">13</text>
<text transform="translate(287.5 723.5) rotate(-90)">14</text>
</g>
</svg>
<svg style="left:0;top:0" width="1430" height="790" viewBox="0 0 1430 790">
<defs>
<clipPath id="slideclip"><rect x="376.3" y="186.1" width="973.7" height="547.6"/></clipPath>
<clipPath id="photoclip"><path d="M932 241H1356V618a62 62 0 0 1-62 62H870V303a62 62 0 0 1 62-62z"/></clipPath>
<linearGradient id="sky" x1="0" y1="0" x2="0" y2="1"><stop offset="0" stop-color="#abc9ee"/><stop offset=".15" stop-color="#bfd3f1"/><stop offset=".3" stop-color="#d2dbf2"/><stop offset=".5" stop-color="#e1dff1"/><stop offset=".75" stop-color="#ebe5f1"/><stop offset="1" stop-color="#efe9f2"/></linearGradient>
<linearGradient id="soffit" x1="0" y1="0" x2="1" y2="0"><stop offset="0" stop-color="#20262b"/><stop offset=".45" stop-color="#353a3c"/><stop offset="1" stop-color="#66574f"/></linearGradient>
<linearGradient id="lface" x1="0" y1="0" x2="0" y2="1"><stop offset="0" stop-color="#59657d"/><stop offset=".5" stop-color="#8491ab"/><stop offset="1" stop-color="#b3a9b8"/></linearGradient>
<linearGradient id="side" x1="0" y1="0" x2="0" y2="1"><stop offset="0" stop-color="#a0a9c0"/><stop offset="1" stop-color="#8792ad"/></linearGradient>
<linearGradient id="glassb" x1="0" y1="0" x2="0" y2="1"><stop offset="0" stop-color="#9db9e6"/><stop offset="1" stop-color="#6f9ee0"/></linearGradient>
<linearGradient id="glassw" x1="0" y1="0" x2="0" y2="1"><stop offset="0" stop-color="#c5cde3"/><stop offset="1" stop-color="#dcdcea"/></linearGradient>
<pattern id="zig" x="387" y="681.500" width="25" height="13.400" patternUnits="userSpaceOnUse"><path d="M-2 14.500L12.500 1.500 27 14.500" fill="none" stroke="#fff" stroke-width="5"/></pattern>
<clipPath id="circ"><circle cx="452" cy="775.500" r="94.500"/></clipPath>
</defs>
<g id="slideG">
<rect x="376.3" y="186.1" width="973.7" height="547.6" fill="#0e1742"/>
<rect x="1115" y="183.500" width="235" height="550.2" fill="#332d4f"/>
<g fill="#fff" clip-path="url(#slideclip)"><rect x="845.9" y="182.2" width="6.200" height="6.200"/><rect x="856.7" y="182.2" width="6.200" height="6.200"/><rect x="867.5" y="182.2" width="6.200" height="6.200"/><rect x="878.2" y="182.2" width="6.200" height="6.200"/><rect x="889.0" y="182.2" width="6.200" height="6.200"/><rect x="899.8" y="182.2" width="6.200" height="6.200"/><rect x="845.9" y="193.0" width="6.200" height="6.200"/><rect x="856.7" y="193.0" width="6.200" height="6.200"/><rect x="867.5" y="193.0" width="6.200" height="6.200"/><rect x="878.2" y="193.0" width="6.200" height="6.200"/><rect x="889.0" y="193.0" width="6.200" height="6.200"/><rect x="899.8" y="193.0" width="6.200" height="6.200"/><rect x="845.9" y="203.7" width="6.200" height="6.200"/><rect x="856.7" y="203.7" width="6.200" height="6.200"/><rect x="867.5" y="203.7" width="6.200" height="6.200"/><rect x="878.2" y="203.7" width="6.200" height="6.200"/><rect x="889.0" y="203.7" width="6.200" height="6.200"/><rect x="899.8" y="203.7" width="6.200" height="6.200"/><rect x="845.9" y="214.5" width="6.200" height="6.200"/><rect x="856.7" y="214.5" width="6.200" height="6.200"/><rect x="867.5" y="214.5" width="6.200" height="6.200"/><rect x="878.2" y="214.5" width="6.200" height="6.200"/><rect x="889.0" y="214.5" width="6.200" height="6.200"/><rect x="899.8" y="214.5" width="6.200" height="6.200"/><rect x="845.9" y="225.2" width="6.200" height="6.200"/><rect x="856.7" y="225.2" width="6.200" height="6.200"/><rect x="867.5" y="225.2" width="6.200" height="6.200"/><rect x="878.2" y="225.2" width="6.200" height="6.200"/><rect x="889.0" y="225.2" width="6.200" height="6.200"/><rect x="899.8" y="225.2" width="6.200" height="6.200"/></g>
<g clip-path="url(#slideclip)"><g clip-path="url(#circ)"><rect x="356" y="676" width="200" height="60" fill="url(#zig)"/></g></g>
<g font-family="Liberation Sans, Arial, sans-serif" font-weight="bold" font-size="37.500" fill="#efe5d8" stroke="#efe5d8" stroke-width=".7"><text x="426" y="421.500" textLength="226" lengthAdjust="spacingAndGlyphs">Real estate</text><text x="426" y="473.500" textLength="149" lengthAdjust="spacingAndGlyphs">project</text><text x="426" y="525.500" textLength="180" lengthAdjust="spacingAndGlyphs">Proposal</text></g>
<g clip-path="url(#photoclip)"><rect x="870" y="241" width="486" height="439" fill="url(#sky)"/><polygon points="1186.0,469.0 1294.0,503.7 1351.0,519.3 1356.0,520.0 1356.0,680.0 1186.0,680.0" fill="#d6d6e0"/><polygon points="1320.0,509.0 1356.0,520.0 1356.0,680.0 1338.0,680.0" fill="#e8e2ea"/><polygon points="1297.3,503.7 1319.8,508.9 1326.7,547.0 1302.5,541.8" fill="#2b2e3c"/><polygon points="1302.5,541.8 1326.7,547.0 1337.0,628.2 1314.6,624.8" fill="url(#glassb)"/><polygon points="1314.6,624.8 1337.0,628.2 1342.3,649.0 1318.0,645.6" fill="#2a2d3a"/><polygon points="1318.0,645.6 1342.3,649.0 1346.0,680.0 1322.0,680.0" fill="#7fb0ea"/><polygon points="1198.8,510.7 1276.6,531.4 1287.0,617.8 1205.7,600.6" fill="#1d2230"/><polygon points="1200.5,517.6 1273.0,536.6 1278.3,602.3 1204.0,586.7" fill="url(#glassb)"/><path d="M1211 520.500L1215.500 589M1224.500 524L1229.500 592M1244 529L1250 596.500M1201 529.500L1272 548.500" stroke="#1d2230" stroke-width="2.200" fill="none"/><polygon points="1208.0,621.3 1235.0,626.5 1238.5,680.0 1211.6,680.0" fill="#1d2230"/><polygon points="1213.5,627.0 1231.5,630.5 1234.5,680.0 1216.5,680.0" fill="url(#glassb)"/><polygon points="1241.3,628.2 1260.3,631.7 1263.8,680.0 1243.7,680.0" fill="#1d2230"/><polygon points="1244.5,633.0 1257.5,635.5 1260.0,680.0 1246.5,680.0" fill="url(#glassb)"/><polygon points="1266.2,631.0 1297.3,636.9 1299.8,680.0 1269.7,680.0" fill="#1d2230"/><polygon points="1270.0,636.5 1293.5,641.0 1295.5,680.0 1272.5,680.0" fill="url(#glassb)"/><path d="M1213.500 640L1232.500 643.500M1244.500 645L1258 647.500M1270 649L1294.500 653.500M1281.500 639L1283.500 680" stroke="#1d2230" stroke-width="1.800" fill="none"/><polygon points="870.0,497.0 909.0,503.4 896.0,680.0 870.0,680.0" fill="#1a202c"/><polygon points="870.0,497.0 879.0,498.5 872.0,560.0 870.0,560.0" fill="#8d99b3"/><polygon points="881.7,559.8 895.8,559.8 889.4,633.0 875.3,630.4" fill="#a9b4a4"/><polygon points="871.4,653.5 886.8,653.5 884.2,680.0 870.0,680.0" fill="#b7c7c8"/><polygon points="1008.3,311.3 916.3,436.6 908.0,540.0 894.5,680.0 915.0,680.0 930.4,470.0 935.0,421.0 1008.3,329.0" fill="url(#lface)"/><polygon points="1008.3,327.0 935.1,422.0 930.4,470.0 915.0,680.0 921.0,680.0 936.0,480.0 958.0,450.0 958.1,420.0 996.5,371.5 1008.3,371.5" fill="#1b2027"/><polygon points="1008.3,311.3 1182.0,371.5 1182.0,376.0 1146.9,372.7 1010.3,327.5 1008.3,327.0" fill="#2a3342"/><path d="M1008.300 311.300L1182 371.500" stroke="#414b5c" stroke-width="1.500" fill="none"/><polygon points="1010.3,327.5 1146.9,372.7 1144.4,416.6 1086.7,400.3 996.5,371.5 1008.3,371.5" fill="url(#soffit)"/><path d="M1010.700 338V374M1022.500 370V378" stroke="#9ba3b5" stroke-width="1.600" fill="none"/><polygon points="1146.9,372.0 1182.0,371.5 1192.0,500.0 1207.4,680.0 1169.0,680.0 1157.5,470.0" fill="#28323f"/><polygon points="1143.5,374.0 1150.0,372.5 1157.5,470.0 1169.0,680.0 1164.0,680.0 1152.4,470.0" fill="#b38b78"/><polygon points="1143.5,374.0 1147.0,373.0 1146.0,392.0 1144.0,388.0" fill="#1e2026"/><polygon points="996.5,371.5 958.1,420.3 958.1,450.4 996.5,429.0" fill="#8f9ab3"/><polygon points="997.7,374.0 1086.7,401.5 1086.7,451.0 997.7,430.4" fill="#2a3140"/><path d="M996.500 371.500L1086.700 400.300" stroke="#7d879c" stroke-width="1.600" fill="none"/><polygon points="1086.0,412.6 1146.9,428.5 1152.4,470.0 1164.0,680.0 1086.0,680.0" fill="#1a2333"/><path d="M1086.700 412.800L1147 428.500" stroke="#3b465a" stroke-width="1.600" fill="none"/><polygon points="958.1,450.4 996.5,429.0 993.3,470.0 988.2,680.0 921.0,680.0 936.0,480.0" fill="url(#side)"/><polygon points="996.5,429.0 1086.7,468.0 1086.7,680.0 988.2,680.0 993.3,470.0" fill="#1e242f"/><polygon points="939.4,512.3 945.0,511.0 939.4,595.7 934.3,598.3" fill="#d9d6e4"/><polygon points="948.4,503.4 953.5,502.0 948.4,588.0 943.8,590.6" fill="#d9d6e4"/><polygon points="958.7,462.0 963.8,459.0 960.5,552.0 954.8,556.0" fill="#d9d6e4"/><polygon points="966.4,455.0 994.5,436.0 992.5,521.3 965.0,547.0" fill="#c9cee2"/><polygon points="968.4,462.0 976.0,457.0 974.0,530.0 967.5,536.0" fill="#dcdbe8"/><polygon points="953.5,580.3 992.0,550.8 990.7,640.6 951.0,667.6" fill="#dedce9"/><path d="M963.500 572.500L961 660.500M977.500 562L975.500 651" stroke="#b9b4c8" stroke-width="1.200" fill="none"/><polygon points="929.0,624.0 939.4,620.0 936.9,680.0 927.4,680.0" fill="#d9d6e4"/><polygon points="942.0,615.0 946.6,613.7 943.3,680.0 939.4,680.0" fill="#d9d6e4"/><polygon points="1004.0,433.8 1038.0,441.0 1038.2,531.6 1002.3,522.6" fill="url(#glassw)"/><polygon points="1046.6,443.6 1059.3,446.8 1060.0,536.2 1044.6,532.9" fill="url(#glassw)"/><polygon points="1064.4,448.6 1078.6,452.6 1079.3,540.6 1065.2,537.2" fill="url(#glassw)"/><path d="M1002.500 508L1038.500 517M1044.800 518.500L1060 522M1065.200 523L1079.500 526.500" stroke="#262c38" stroke-width="1.800" fill="none"/><path d="M1018 452l7 2-1 3-7-2zM1019 481l13 3-.5 3-13-3z" fill="#4a5a74"/><polygon points="993.3,550.8 1015.1,554.7 1013.8,644.5 990.7,640.6" fill="#dad9e8"/><polygon points="1022.8,557.2 1067.7,565.0 1067.7,654.2 1022.8,647.0" fill="#cbd4ea"/><path d="M1040.800 560.500V650M1023 631L1067.500 638.500" stroke="#262c38" stroke-width="2.400" fill="none"/><polygon points="978.0,675.0 1021.5,679.0 1021.5,680.0 977.0,680.0" fill="#c3cbe0"/><polygon points="1090.8,468.4 1110.5,471.8 1112.6,558.5 1092.1,556.0" fill="url(#glassw)"/><polygon points="1116.3,475.5 1135.7,479.2 1139.0,564.4 1119.0,559.8" fill="url(#glassw)"/><polygon points="1091.5,528.0 1112.0,532.0 1112.6,558.5 1092.1,556.0" fill="#8aa5d6"/><polygon points="1118.0,535.0 1138.0,540.0 1139.0,564.4 1119.0,559.8" fill="#a9bde2"/><path d="M1091.500 540.500L1112.500 544.500M1118.500 545.500L1138.500 550.500" stroke="#1a2333" stroke-width="1.600" fill="none"/><path d="M1095 501l10 3-.5 3-10-3zM1120 508l8 2-.5 3-8-2z" fill="#40557a"/><polygon points="1095.2,583.4 1116.0,586.8 1117.8,671.4 1097.2,667.6" fill="url(#glassb)"/><polygon points="1120.3,588.6 1133.2,590.6 1135.7,674.0 1122.9,672.2" fill="url(#glassb)"/><path d="M1096.800 652L1117.500 656M1122.500 657L1135.500 659.500" stroke="#1a2333" stroke-width="2" fill="none"/></g>
</g>
</svg>
<div class="a" style="left:824px;top:758.500px;width:59px;height:2px;background:#777a82"></div>
<div class="t" style="left:315px;top:804px;font-size:18px;letter-spacing:.16px;color:#0c0c0c">Click to add speaker notes</div>
</div>
<!-- ===== COMMENTS ===== -->
<div id="comments">
<div class="t" id="c_title" style="left:1450px;top:101px;font-size:28px;color:#3a3d44">Comments</div>
<svg style="left:1715px;top:100px" width="29" height="29" viewBox="0 0 24 24"><path fill="#30333a" d="M12 22c1.100 0 2-.9 2-2h-4c0 1.100.9 2 2 2zm6-6v-5c0-3.070-1.630-5.640-4.500-6.320V4c0-.83-.67-1.500-1.500-1.500s-1.500.67-1.500 1.500v.68C7.640 5.360 6 7.920 6 11v5l-2 2v1h16v-1l-2-2zm-2 1H8v-6c0-2.480 1.510-4.500 4-4.500s4 2.020 4 4.500v6z"/></svg>
<svg style="left:1776px;top:106px" width="18" height="17" viewBox="0 0 18 17"><path d="M1.500 1L16.500 16M16.500 1L1.500 16" stroke="#30333a" stroke-width="2.300" fill="none"/></svg>
<div class="a" style="left:1445px;top:150px;width:150px;height:59px;background:#dfe4f5;border-radius:4px 4px 0 0"></div>
<div class="a" style="left:1430px;top:209px;width:400px;height:1px;background:#c2c3cc"></div>
<div class="a" style="left:1460px;top:206px;width:118px;height:3px;background:#0b57d0;border-radius:3px 3px 0 0"></div>
<div class="t" id="c_all" style="left:1465px;top:172px;font-size:17.800px;color:#0b57d0">All comments</div>
<div class="t" id="c_for" style="left:1612px;top:172px;font-size:17.800px;color:#30333a">For you</div>
<svg style="left:1770px;top:167px" width="29" height="29" viewBox="0 0 24 24"><path fill="#30333a" d="M15.500 14h-.79l-.28-.27A6.471 6.471 0 0 0 16 9.500 6.500 6.500 0 1 0 9.500 16c1.610 0 3.090-.59 4.230-1.570l.27.28v.79l5 4.990L20.490 19l-4.990-5zm-6 0C7.010 14 5 11.990 5 9.500S7.010 5 9.500 5 14 7.010 14 9.500 11.990 14 9.500 14z"/></svg>
<div class="a" style="left:1450px;top:230px;width:141px;height:40px;border-radius:10px;border:1px solid #747775"></div>
<div class="t" id="c_types" style="left:1476px;top:241px;font-size:18.500px;color:#30333a">All types</div>
<svg style="left:1557px;top:237px" width="24" height="24" viewBox="0 0 24 24"><path fill="#30333a" d="M7 10l5 5 5-5z"/></svg>
<div class="a" style="left:1601px;top:230px;width:142px;height:40px;border-radius:10px;border:1px solid #747775"></div>
<div class="t" id="c_slides" style="left:1627px;top:241px;font-size:18.500px;color:#30333a">All slides</div>
<svg style="left:1709px;top:237px" width="24" height="24" viewBox="0 0 24 24"><path fill="#30333a" d="M7 10l5 5 5-5z"/></svg>
<div class="a" style="left:1452px;top:291px;width:379px;height:226px;border-radius:14px;background:#eaecf9"></div>
<div class="t" id="c_res" style="left:1471px;top:313px;font-size:15.300px;color:#30333a">Residences</div>
<svg style="left:1471px;top:357px" width="40" height="40" viewBox="0 0 40 40"><defs><clipPath id="av2"><circle cx="20" cy="20" r="20"/></clipPath></defs><g clip-path="url(#av2)"><rect width="40" height="40" fill="#d3dcd6"/><rect x="0" y="6" width="13" height="34" fill="#bccbc6"/><rect x="6" y="8" width="10" height="7" fill="#eef1ee"/><rect x="30" y="4" width="10" height="30" fill="#dfe8dc"/><rect x="33" y="26" width="5" height="8" fill="#c9cf6a" opacity=".6"/><path d="M11.500 40V24c0-4 3-6.500 7-7l3-1 3 1c4 .5 8.500 3 8.500 7v16z" fill="#16171d"/><path d="M4 34c0-3 3-4.500 7-4l6 2v8H4z" fill="#121318"/><path d="M19.200 15.500h5l-.8 9-1.700 2.500-1.700-2.500z" fill="#e9e9ee"/><path d="M21 16.500h1.400l.5 7-1.200 2-1.200-2z" fill="#30334a"/><ellipse cx="21.500" cy="9.500" rx="4" ry="5.600" fill="#c49a86"/><path d="M17.300 8.500c-.5-7 9-7 8.400 0-.6-3-1.500-3.600-4.200-3.600s-3.600.6-4.200 3.600z" fill="#231c1a"/><rect x="18.300" y="8.600" width="6.400" height="1" fill="#4a3a34" opacity=".7"/></g></svg>
<div class="t" id="c_name" style="left:1521px;top:357px;font-size:18px;letter-spacing:.3px;-webkit-text-stroke:.32px #24262b;color:#24262b">Mubin Saiyed</div>
<div class="t" id="c_time" style="left:1521px;top:379px;font-size:15.200px;color:#3c4047">10:30 PM Today</div>
<div class="t" id="c_l1" style="left:1471px;top:413px;font-size:18px;letter-spacing:-.21px;color:#30333a">@<span style="color:#0b57d0">anurag.b@slidesai.io</span> please check</div>
<div class="t" id="c_l2" style="left:1471px;top:438px;font-size:18px;color:#30333a">and revert</div>
<div class="t" id="c_as" style="left:1471px;top:475px;font-size:15.100px;color:#30333a">Assigned to anurag.b@slidesai.io</div>
</div>
<div id="rail">
<svg style="left:1873.500px;top:94.800px" width="23.500" height="23.500" viewBox="0 0 24 24"><rect x="1" y="1" width="22" height="22" rx="2.500" fill="#4285f4"/><path d="M18 6H23V18H18z" fill="#fbbc04"/><path d="M6 18H18V23H6z" fill="#34a853"/><path d="M1 18H6V23H3.500A2.500 2.500 0 0 1 1 20.500z" fill="#188038"/><path d="M18 1H20.500A2.500 2.500 0 0 1 23 3.500V6H18z" fill="#1967d2"/><path d="M18 18H23L18 23z" fill="#ea4335"/><path d="M18 18H23L18 23z" fill="none"/><rect x="6" y="6" width="12" height="12" fill="#fff"/><text x="12" y="15.400" font-family="Liberation Sans, Arial, sans-serif" font-size="9" font-weight="bold" fill="#4285f4" text-anchor="middle" letter-spacing="-.3">31</text></svg>
<svg style="left:1874px;top:165px" width="23" height="23" viewBox="0 0 23 23"><rect width="23" height="23" rx="2.500" fill="#fbbc04"/><path d="M11.500 5a4.300 4.300 0 0 0-2.300 7.900V15h4.600v-2.100A4.300 4.300 0 0 0 11.500 5zM9.500 16.200h4v1.500h-4z" fill="#fff"/></svg>
<svg style="left:1873px;top:234px" width="24" height="24" viewBox="0 0 24 24"><circle cx="11.500" cy="13" r="8.300" fill="none" stroke="#2f7af0" stroke-width="3.200"/><path d="M7.500 13l3 3L20 5.500" fill="none" stroke="#2f7af0" stroke-width="3.200" stroke-linecap="round"/><circle cx="20" cy="4.800" r="2.300" fill="#1a5fd6"/></svg>
<svg style="left:1875px;top:305px" width="20" height="24" viewBox="0 0 20 24"><circle cx="10" cy="5.500" r="4.300" fill="#1f66d8"/><path d="M1.500 22v-4.500c0-3.500 4-5.500 8.500-5.500s8.500 2 8.500 5.500V22z" fill="#1f66d8"/><path d="M1.500 17h17v5h-17z" fill="#5c92ea" opacity=".55"/></svg>
<svg style="left:1877.700px;top:375px" width="15.800" height="23.500" viewBox="0 0 18 26" preserveAspectRatio="none"><defs><clipPath id="pin"><path d="M9 0a9 9 0 0 0-9 9c0 5 4.500 8 7 15 .4 1.300.8 2 2 2s1.600-.7 2-2c2.500-7 7-10 7-15a9 9 0 0 0-9-9z"/></clipPath></defs><g clip-path="url(#pin)"><rect width="18" height="26" fill="#34a853"/><path d="M0 0h9v9L0 18z" fill="#ea4335"/><path d="M9 0h9v9H9z" fill="#4285f4"/><path d="M0 0L9 9 0 14z" fill="#ea4335"/><path d="M3 0h6v9z" fill="#1a73e8" opacity="0"/><path d="M18 4v12L9 26V9z" fill="#fbbc04"/><path d="M9 9l9 4-9 13-4-8z" fill="#34a853"/><path d="M9 9L18 0v13z" fill="#4285f4" opacity="0"/></g><circle cx="9" cy="9" r="3.200" fill="#fff"/></svg>
<div class="a" style="left:1873px;top:441.500px;width:26px;height:1px;background:#d6d6e0"></div>
<svg style="left:1873.700px;top:486.500px" width="24" height="24" viewBox="0 0 24 24"><path fill="#17181c" d="M20.500 13.100h-7.400v7.400h-2.200v-7.400H3.500v-2.200h7.400V3.500h2.200v7.400h7.400v2.200z"/></svg>
<svg style="left:1878px;top:822px" width="14" height="16" viewBox="0 0 14 16"><path d="M4 2l6 6-6 6" fill="none" stroke="#3a3d45" stroke-width="1.800"/></svg>
</div>
</body>
</html>
